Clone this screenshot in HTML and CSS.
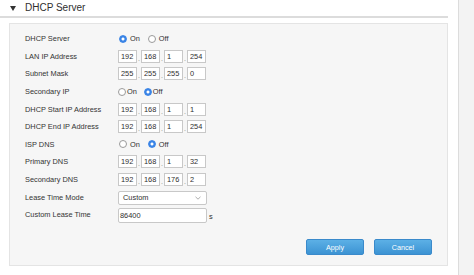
FILE: index.html
```html
<!DOCTYPE html>
<html lang="en">
<head>
    <meta charset="UTF-8">
    <title>DHCP Server</title>
    <link rel="stylesheet" href="styles.css">
</head>
<body>
    <div class="page">
        <div class="main">
            <div class="section-head">
                <span class="caret"></span>
                <span class="section-title">DHCP Server</span>
            </div>

            <div class="panel">
                <div class="row">
                    <div class="label">DHCP Server</div>
                    <div class="radios">
                        <span class="radio checked"></span><span class="rtext">On</span>
                        <span class="radio"></span><span class="rtext">Off</span>
                    </div>
                </div>
                <div class="row">
                    <div class="label">LAN IP Address</div>
                    <div class="ip"><span class="oct">192</span><i>.</i><span class="oct">168</span><i>.</i><span class="oct">1</span><i>.</i><span class="oct">254</span></div>
                </div>
                <div class="row">
                    <div class="label">Subnet Mask</div>
                    <div class="ip"><span class="oct">255</span><i>.</i><span class="oct">255</span><i>.</i><span class="oct">255</span><i>.</i><span class="oct">0</span></div>
                </div>
                <div class="row">
                    <div class="label">Secondary IP</div>
                    <div class="radios tight">
                        <span class="radio"></span><span class="rtext">On</span>
                        <span class="radio checked"></span><span class="rtext">Off</span>
                    </div>
                </div>
                <div class="row">
                    <div class="label">DHCP Start IP Address</div>
                    <div class="ip"><span class="oct">192</span><i>.</i><span class="oct">168</span><i>.</i><span class="oct">1</span><i>.</i><span class="oct">1</span></div>
                </div>
                <div class="row">
                    <div class="label">DHCP End IP Address</div>
                    <div class="ip"><span class="oct">192</span><i>.</i><span class="oct">168</span><i>.</i><span class="oct">1</span><i>.</i><span class="oct">254</span></div>
                </div>
                <div class="row">
                    <div class="label">ISP DNS</div>
                    <div class="radios">
                        <span class="radio"></span><span class="rtext">On</span>
                        <span class="radio checked"></span><span class="rtext">Off</span>
                    </div>
                </div>
                <div class="row">
                    <div class="label">Primary DNS</div>
                    <div class="ip"><span class="oct">192</span><i>.</i><span class="oct">168</span><i>.</i><span class="oct">1</span><i>.</i><span class="oct">32</span></div>
                </div>
                <div class="row">
                    <div class="label">Secondary DNS</div>
                    <div class="ip"><span class="oct">192</span><i>.</i><span class="oct">168</span><i>.</i><span class="oct">176</span><i>.</i><span class="oct">2</span></div>
                </div>
                <div class="row">
                    <div class="label">Lease Time Mode</div>
                    <div class="select">
                        <span>Custom</span>
                        <svg class="chev" width="6" height="4" viewBox="0 0 6 4"><path d="M0.5 0.8 L3 3.2 L5.5 0.8" fill="none" stroke="#999" stroke-width="0.8"/></svg>
                    </div>
                </div>
                <div class="row">
                    <div class="label">Custom Lease Time</div>
                    <span class="field">86400</span><span class="unit">s</span>
                </div>

                <div class="actions">
                    <button class="btn">Apply</button>
                    <button class="btn">Cancel</button>
                </div>
            </div>
        </div>
        <div class="side"></div>
    </div>
</body>
</html>
```

FILE: styles.css
```css
body {
    margin: 0;
    padding: 0;
    background-color: #fff;
    font-family: 'Liberation Sans', Arial, sans-serif;
    color: #2f2f2f;
}

.page {
    display: flex;
    height: 275px;
}

.main {
    width: 448px;
}

.side {
    margin-left: 10px;
    flex: 1;
    background-color: #f3f3f3;
    border-left: 1px solid #dcdcdc;
}

.section-head {
    display: flex;
    align-items: center;
    height: 16px;
    border-bottom: 2px solid #dcdcdc;
    padding-left: 10px;
}

.caret {
    width: 0;
    height: 0;
    border-left: 3px solid transparent;
    border-right: 3px solid transparent;
    border-top: 5px solid #333;
    margin-top: 1px;
}

.section-title {
    margin-left: 9px;
    font-size: 10px;
    margin-top: -2px;
}

.panel {
    margin: 5px 0 0 9px;
    height: 243px;
    background-color: #f6f6f6;
    border: 1px solid #e4e4e4;
    padding: 6px 15px 0 15px;
    box-sizing: border-box;
    position: relative;
}

.row {
    display: flex;
    align-items: center;
    height: 17.6px;
    font-size: 7.4px;
}

.label {
    width: 93px;
    color: #333;
}

.radios {
    display: flex;
    align-items: center;
    padding-left: 1px;
}

.radio {
    width: 8px;
    height: 8px;
    border: 1px solid #9a9a9a;
    border-radius: 50%;
    background-color: #fff;
    box-sizing: border-box;
}

.radio.checked {
    border: 1px solid #3a84e6;
    background: radial-gradient(circle, #fff 0 1.2px, #3a84e6 1.8px);
}

.rtext {
    margin: 0 8px 0 3px;
}

.radios.tight {
    padding-left: 0;
}

.radios.tight .rtext {
    margin: 0 7px 0 1px;
}

.ip {
    display: flex;
    align-items: flex-end;
}

.oct {
    width: 19px;
    height: 13px;
    line-height: 12px;
    background-color: #fff;
    border: 1px solid #c8c8c8;
    box-sizing: border-box;
    padding-left: 2px;
}

.ip i {
    font-style: normal;
    width: 4px;
    text-align: center;
    font-size: 7px;
    color: #888;
    line-height: 9px;
}

.select {
    width: 89px;
    height: 14px;
    display: flex;
    align-items: center;
    justify-content: space-between;
    background-color: #fff;
    border: 1px solid #c8c8c8;
    border-radius: 2px;
    box-sizing: border-box;
    padding: 0 5px 0 4px;
    margin-top: 1px;
}

.field {
    width: 89px;
    height: 15px;
    line-height: 13px;
    background-color: #fff;
    border: 1px solid #c8c8c8;
    border-radius: 2px;
    box-sizing: border-box;
    padding-left: 1px;
    margin-top: 2px;
}

.unit {
    margin-left: 2px;
    margin-top: 4px;
}

.actions {
    position: absolute;
    right: 15px;
    bottom: 10px;
    display: flex;
    gap: 10px;
}

.btn {
    width: 58px;
    height: 16px;
    border: 1px solid #3a8acb;
    border-radius: 2px;
    background: linear-gradient(#5cb0e6, #3c93d3);
    color: #fff;
    font-family: 'Liberation Sans', Arial, sans-serif;
    font-size: 7.2px;
    padding: 0;
    cursor: pointer;
}
```
